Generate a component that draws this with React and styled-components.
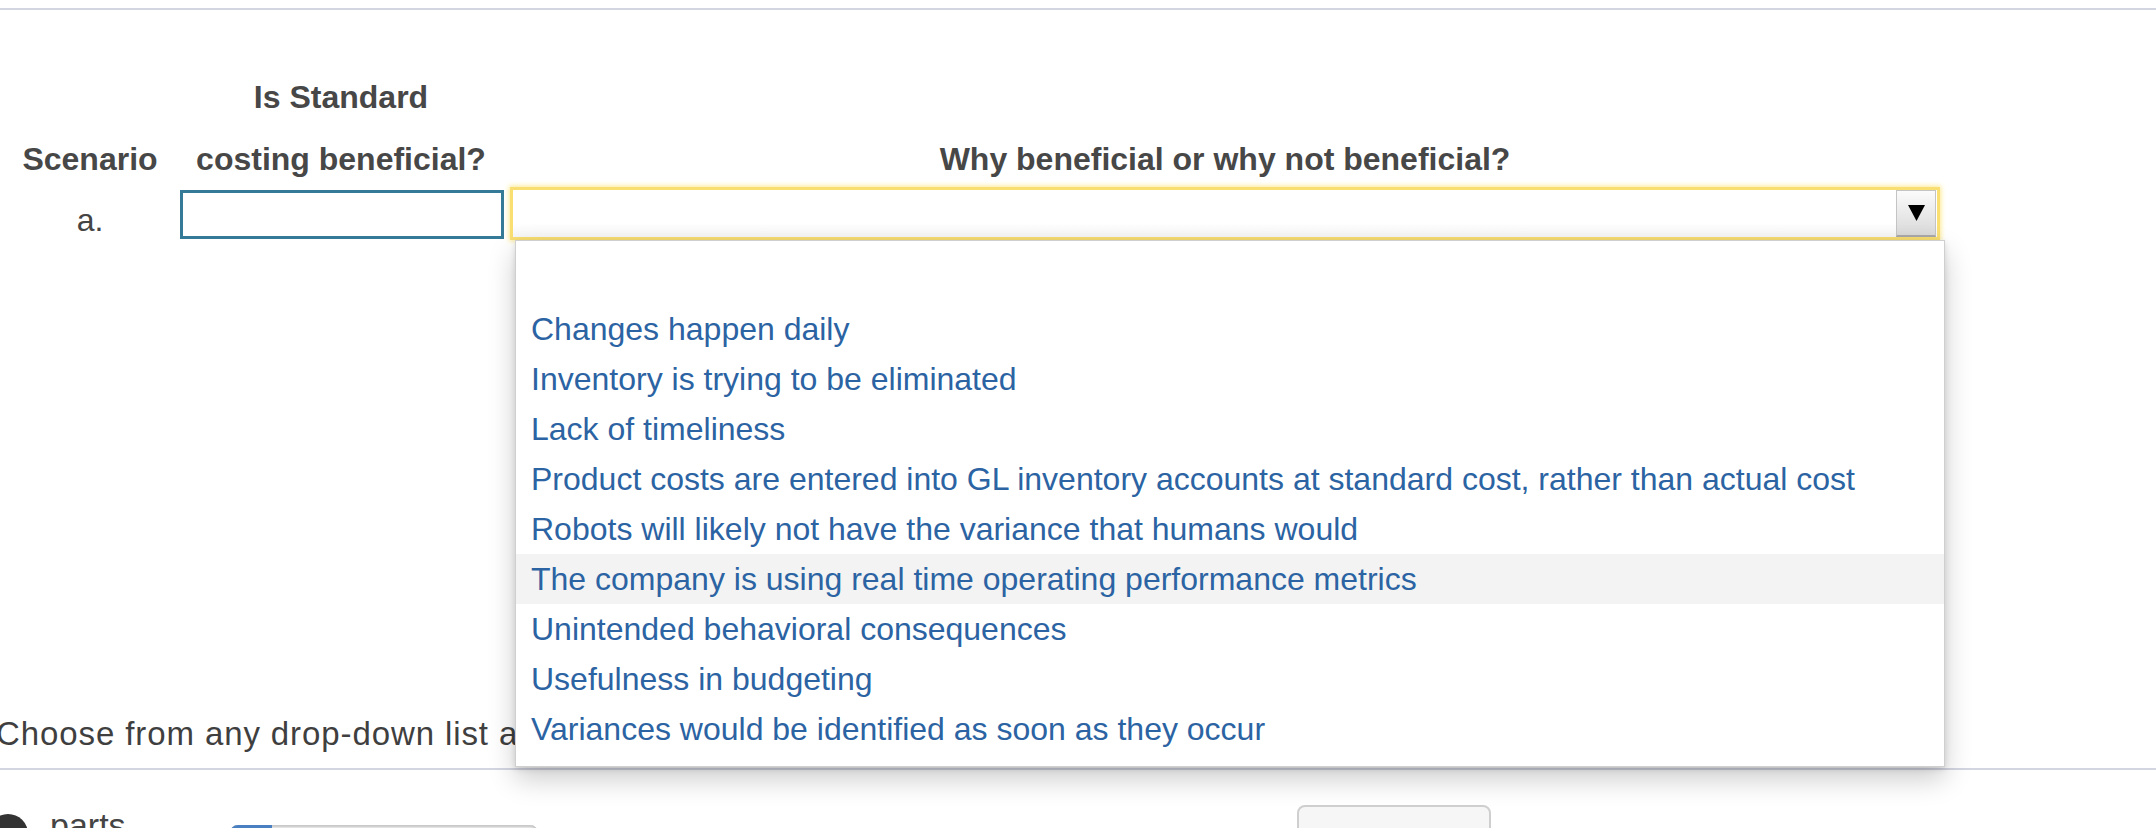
import React from "react";
import styled, { createGlobalStyle } from "styled-components";

const GlobalStyle = createGlobalStyle`
  html, body {
    margin: 0;
    padding: 0;
    overflow: hidden;
    background: #fff;
  }
  body {
    font-family: "Liberation Sans", Arial, Helvetica, sans-serif;
    color: #444;
  }
`;

const options = [
  "",
  "Changes happen daily",
  "Inventory is trying to be eliminated",
  "Lack of timeliness",
  "Product costs are entered into GL inventory accounts at standard cost, rather than actual cost",
  "Robots will likely not have the variance that humans would",
  "The company is using real time operating performance metrics",
  "Unintended behavioral consequences",
  "Usefulness in budgeting",
  "Variances would be identified as soon as they occur",
];

const App = () => {
  const hovered = 6;
  return (
    <>
      <GlobalStyle />
      <Page>
        <Rule $top />
        <QuestionTable>
          <HeadCell>Scenario</HeadCell>
          <HeadCell $inset>
            Is Standard
            <br />
            costing beneficial?
          </HeadCell>
          <HeadCell>Why beneficial or why not beneficial?</HeadCell>

          <LabelCell>a.</LabelCell>
          <TextInput />
          <SelectWrap>
            <SelectBox>
              <ArrowButton>
                <svg width="17" height="16" viewBox="0 0 17 16">
                  <polygon points="0,0 17,0 8.5,16" fill="#000" />
                </svg>
              </ArrowButton>
            </SelectBox>
            <OptionList>
              {options.map((opt, i) => (
                <Option key={i} $active={i === hovered}>
                  {opt}
                </Option>
              ))}
            </OptionList>
          </SelectWrap>
        </QuestionTable>

        <Instruction>
          Choose from any drop-down list and then continue to the next question.
        </Instruction>
        <Rule />

        <Footer>
          <PartsBadge />
          <PartsLabel>parts</PartsLabel>
          <Progress>
            <ProgressFill style={{ width: `${(42 / 308) * 100}%` }} />
          </Progress>
          <NavButton />
        </Footer>
      </Page>
    </>
  );
};

export default App;

const Page = styled.div`
  width: 2156px;
  height: 828px;
  padding-top: 8px;
  box-sizing: border-box;
  overflow: hidden;
`;

const Rule = styled.div`
  height: 2px;
  background: #d3d5e1;
  margin-top: ${props => (props.$top ? "0" : "16px")};
`;

const QuestionTable = styled.div`
  display: grid;
  grid-template-columns: 180px 330px 1430px;
  margin-top: 56px;
`;

const HeadCell = styled.div`
  align-self: end;
  text-align: center;
  font-weight: 700;
  font-size: 32px;
  line-height: 62px;
  color: #474747;
  padding-right: ${props => (props.$inset ? "8px" : "0")};
`;

const LabelCell = styled.div`
  text-align: center;
  font-size: 32px;
  line-height: 37px;
  padding-top: 12px;
  color: #444;
`;

const TextInput = styled.div`
  width: 324px;
  height: 49px;
  box-sizing: border-box;
  border: 3px solid #357a96;
  background: #fff;
`;

const SelectWrap = styled.div`
  position: relative;
`;

const SelectBox = styled.div`
  height: 53px;
  margin-top: -3px;
  box-sizing: border-box;
  border: 3px solid #f9df72;
  box-shadow: 0 0 5px 1px #fde98f;
  background: linear-gradient(#ffffff 70%, #f6f6f6);
  display: flex;
  justify-content: flex-end;
  padding: 0 1px 0 0;
`;

const ArrowButton = styled.div`
  width: 40px;
  box-sizing: border-box;
  border: 1px solid #c4c4c4;
  border-bottom: 2px solid #a9a9a9;
  background: linear-gradient(#fbfbfb, #d9d9d9);
  display: flex;
  align-items: center;
  justify-content: center;
`;

const OptionList = styled.div`
  position: absolute;
  top: 100%;
  left: 5px;
  width: 1430px;
  box-sizing: border-box;
  background: #fff;
  border: 1px solid #cfcfcf;
  box-shadow: 0 12px 26px rgba(0, 0, 0, 0.2), 0 2px 6px rgba(0, 0, 0, 0.12);
  padding: 13px 0 12px;
  z-index: 10;
`;

const Option = styled.div`
  height: 50px;
  line-height: 50px;
  padding-left: 15px;
  font-size: 32px;
  color: #2b63a3;
  white-space: nowrap;
  background: ${props => (props.$active ? "#f3f3f3" : "transparent")};
`;

const Instruction = styled.div`
  margin-top: 475px;
  margin-left: -4px;
  font-size: 33px;
  letter-spacing: 0.9px;
  line-height: 37px;
  color: #3f3f3f;
  white-space: nowrap;
`;

const Footer = styled.div`
  display: flex;
  align-items: flex-start;
`;

const PartsBadge = styled.div`
  width: 40px;
  height: 40px;
  margin: 44px 0 0 -12px;
  border-radius: 50%;
  background: #333;
  flex-shrink: 0;
`;

const PartsLabel = styled.div`
  margin: 35px 0 0 22px;
  font-size: 34px;
  line-height: 40px;
  color: #444;
`;

const Progress = styled.div`
  width: 308px;
  height: 30px;
  margin: 55px 0 0 104px;
  border-radius: 8px;
  background: #ececec;
  box-shadow: inset 0 2px 2px #c8c8c8, inset 2px 0 0 #d6d6d6, inset -2px 0 0 #d6d6d6;
  overflow: hidden;
  flex-shrink: 0;
`;

const ProgressFill = styled.div`
  height: 100%;
  background: #4a80c2;
`;

const NavButton = styled.div`
  width: 194px;
  height: 60px;
  margin: 35px 0 0 759px;
  box-sizing: border-box;
  border: 2px solid #cfcfcf;
  border-radius: 8px;
  background: #f6f6f6;
  flex-shrink: 0;
`;
